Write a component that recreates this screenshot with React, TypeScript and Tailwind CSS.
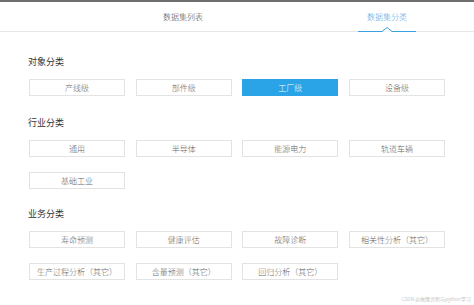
import React from 'react'

const groups = [
  { title: '对象分类', items: ['产线级', '部件级', '工厂级', '设备级'], mt: 'mt-[24px]' },
  { title: '行业分类', items: ['通用', '半导体', '能源电力', '轨道车辆', '基础工业'], mt: 'mt-[21px]' },
  { title: '业务分类', items: ['寿命预测', '健康评估', '故障诊断', '相关性分析（其它）', '生产过程分析（其它）', '含量预测（其它）', '回归分析（其它）'], mt: 'mt-[19px]' },
]

export default function App() {
  const font = { fontFamily: '"Noto Sans CJK SC", "Noto Sans", sans-serif' }
  return (
    <div className="relative w-[474px] h-[305px] bg-white overflow-hidden" style={font}>
      <div className="h-[2px] bg-[#6e6e6e]" />
      {/* tabs */}
      <div className="relative h-[30px] border-b border-[#e6e6e6] flex items-center">
        <div className="ml-[154px] w-[58px] text-center text-[8px] font-light text-[#444]">数据集列表</div>
        <div className="relative ml-[146px] w-[58px] h-full flex items-center justify-center text-[8px] font-light text-[#3aa0e2]">
          数据集分类
          <svg className="absolute left-0 bottom-[-1px]" width="58" height="6" viewBox="0 0 58 6">
            <polyline points="0,5.5 24,5.5 29,1.5 34,5.5 58,5.5" fill="white" stroke="#3aa0e2" strokeWidth="1" />
          </svg>
        </div>
      </div>

      <div className="pl-[29px]">
        {groups.map((g) => (
          <div key={g.title} className={g.mt}>
            <div className="h-[12px] leading-[12px] text-[9px] text-[#333] -ml-[1px]">{g.title}</div>
            <div className="mt-[11px] grid grid-cols-[repeat(4,96px)] gap-x-[10.67px] gap-y-[15px]">
              {g.items.map((it) => (
                <div
                  key={it}
                  className={
                    it === '工厂级'
                      ? 'h-[17px] flex items-center justify-center text-[8px] font-light bg-[#2aa4e6] text-white'
                      : 'h-[17px] flex items-center justify-center text-[8px] font-light text-[#666] border border-[#e3e3e3] bg-white'
                  }
                >
                  {it}
                </div>
              ))}
            </div>
          </div>
        ))}
      </div>

      <div className="absolute right-[3px] bottom-[3px] text-[5px] font-light text-[#aaa]">CSDN @故障诊断与python学习</div>
    </div>
  )
}
